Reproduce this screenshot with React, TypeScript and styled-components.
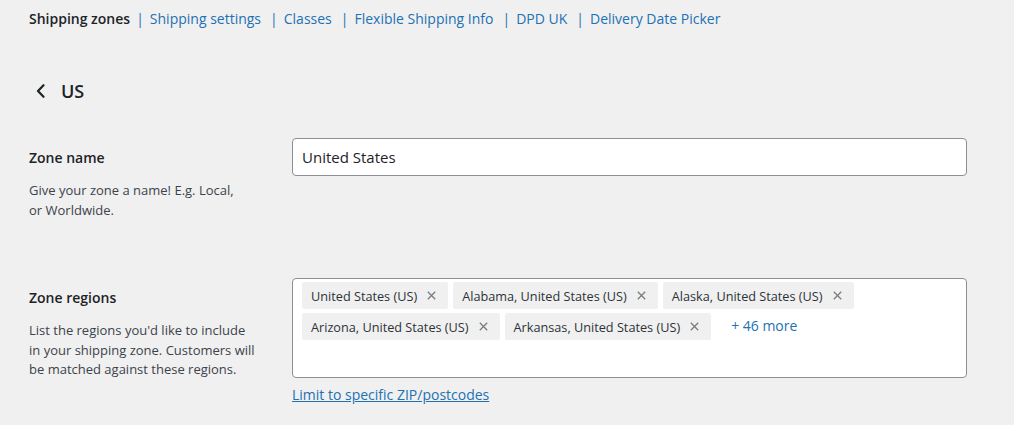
import React from "react";
import styled, { createGlobalStyle } from "styled-components";

const GlobalStyle = createGlobalStyle`
  html, body { margin: 0; padding: 0; background: #f0f0f1; }
  body {
    font-family: "Open Sans", "Noto Sans", sans-serif;
    color: #1d2327;
    -webkit-font-smoothing: antialiased;
  }
  * { box-sizing: border-box; }
`;

const Page = styled.div`
  width: 1014px;
  min-height: 425px;
  background: #f0f0f1;
  padding: 9px 47px 0 29px;
`;

const Nav = styled.nav`
  display: flex;
  align-items: center;
  font-size: 14px;
  line-height: 20px;
  white-space: nowrap;
`;

const NavCurrent = styled.span`
  font-weight: 600;
  color: #1d2327;
`;

const NavLink = styled.a`
  color: #2271b1;
  text-decoration: none;
  padding-right: 3px;
`;

const Sep = styled.span`
  color: #2271b1;
  margin: 0 6px;
`;

const Header = styled.div`
  display: flex;
  align-items: center;
  gap: 16px;
  margin-top: 48px;
  padding-left: 7px;
  height: 28px;
`;

const BackLink = styled.a`
  display: flex;
  align-items: center;
  color: #1d2327;
`;

const Title = styled.h2`
  margin: 0;
  font-size: 18px;
  font-weight: 600;
  line-height: 28px;
  color: #1d2327;
`;

const Form = styled.div`
  display: flex;
  flex-direction: column;
  gap: 58px;
  margin-top: 33px;
`;

const FormRow = styled.div`
  display: grid;
  grid-template-columns: 263px 675px;
  align-items: start;
`;

const Label = styled.div`
  padding-top: 10px;
  font-size: 14px;
  font-weight: 600;
  line-height: 20px;
  color: #1d2327;
`;

const Description = styled.p`
  margin: 13px 0 0;
  font-size: 13px;
  line-height: 19.5px;
  color: #3c434a;
`;

const TextInput = styled.input`
  width: 100%;
  height: 38px;
  margin: 0;
  padding: 0 9px;
  border: 1px solid #8c8f94;
  border-radius: 4px;
  background: #fff;
  font-family: "Open Sans", "Noto Sans", sans-serif;
  font-size: 15px;
  color: #1d2327;
  outline: none;
`;

const RegionsBox = styled.div`
  display: flex;
  flex-wrap: wrap;
  align-content: flex-start;
  align-items: center;
  gap: 4px 5px;
  height: 100px;
  padding: 3px 9px;
  border: 1px solid #8c8f94;
  border-radius: 4px;
  background: #fff;
`;

const Chip = styled.span`
  display: inline-flex;
  align-items: center;
  height: 27px;
  padding: 0 12px 0 9px;
  border-radius: 2px;
  background: #f0f0f0;
  font-size: 12.7px;
  color: #2c3338;
  white-space: nowrap;
`;

const ChipRemove = styled.span`
  display: inline-flex;
  margin-left: 10px;
  color: #787c82;
`;

const More = styled.a`
  margin-left: 15px;
  font-size: 14px;
  line-height: 25px;
  align-self: flex-start;
  color: #2271b1;
  text-decoration: none;
`;

const LimitLink = styled.a`
  display: inline-block;
  margin-top: 7px;
  font-size: 14px;
  line-height: 20px;
  color: #2271b1;
  text-decoration: underline;
`;

const Chevron = () => (
  <svg width="9" height="14" viewBox="0 0 9 14" fill="none">
    <path d="M7.5 1.2 L2 7 L7.5 12.8" stroke="currentColor" strokeWidth="2.2" strokeLinecap="round" strokeLinejoin="round" />
  </svg>
);

const Cross = () => (
  <svg width="9" height="9" viewBox="0 0 9 9" fill="none">
    <path d="M0.8 0.8 L8.2 8.2 M8.2 0.8 L0.8 8.2" stroke="currentColor" strokeWidth="1.3" />
  </svg>
);

const tabs = ["Shipping settings", "Classes", "Flexible Shipping Info", "DPD UK", "Delivery Date Picker"];
const regions = [
  "United States (US)",
  "Alabama, United States (US)",
  "Alaska, United States (US)",
  "Arizona, United States (US)",
  "Arkansas, United States (US)",
];

export default function App() {
  return (
    <>
      <GlobalStyle />
      <Page>
        <Nav>
          <NavCurrent>Shipping zones</NavCurrent>
          {tabs.map((t) => (
            <React.Fragment key={t}>
              <Sep>|</Sep>
              <NavLink href="#">{t}</NavLink>
            </React.Fragment>
          ))}
        </Nav>

        <Header>
          <BackLink href="#" aria-label="Back">
            <Chevron />
          </BackLink>
          <Title>US</Title>
        </Header>

        <Form>
          <FormRow>
            <div>
              <Label>Zone name</Label>
              <Description>
                Give your zone a name! E.g. Local,
                <br />
                or Worldwide.
              </Description>
            </div>
            <TextInput defaultValue="United States" />
          </FormRow>

          <FormRow>
            <div>
              <Label>Zone regions</Label>
              <Description>
                List the regions you'd like to include
                <br />
                in your shipping zone. Customers will
                <br />
                be matched against these regions.
              </Description>
            </div>
            <div>
              <RegionsBox>
                {regions.map((r) => (
                  <Chip key={r}>
                    {r}
                    <ChipRemove>
                      <Cross />
                    </ChipRemove>
                  </Chip>
                ))}
                <More href="#">+ 46 more</More>
              </RegionsBox>
              <LimitLink href="#">Limit to specific ZIP/postcodes</LimitLink>
            </div>
          </FormRow>
        </Form>
      </Page>
    </>
  );
}
